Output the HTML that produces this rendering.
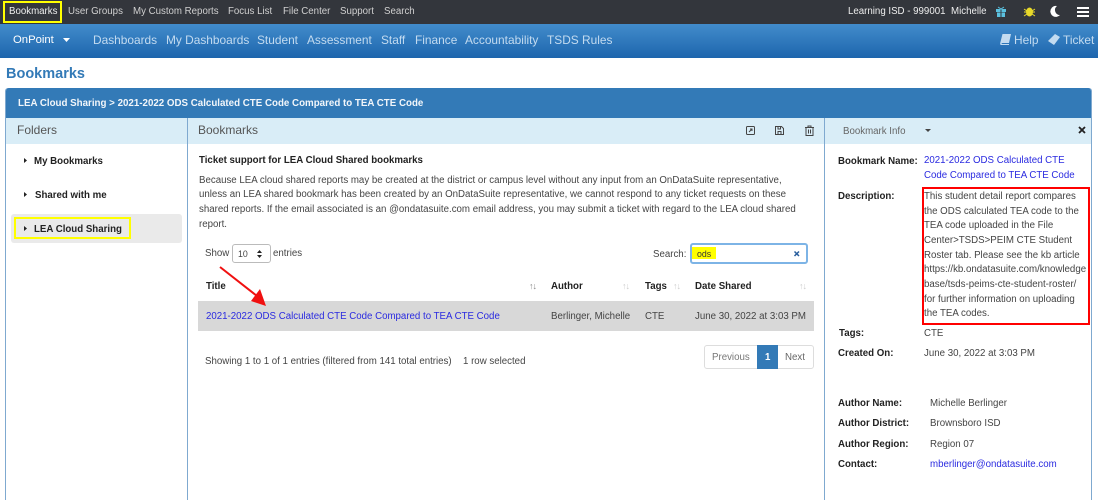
<!DOCTYPE html>
<html><head><meta charset="utf-8">
<style>
html,body{margin:0;padding:0;width:1098px;height:500px;overflow:hidden;background:#fff;font-family:"Liberation Sans",sans-serif;font-size:9.7px;color:#444}
.a{position:absolute;white-space:nowrap;line-height:16px}
.b{font-weight:bold;color:#222;}
.t{color:#d0d0d0;font-size:9.7px;line-height:14px}
.n{color:#c3dbf0;font-size:11.9px;line-height:16px}
a{color:#2a2ae0;text-decoration:none}
.a.d{line-height:14.67px}
svg{position:absolute;overflow:visible}
</style></head><body>
<div class="a" style="left:0;top:0;width:1098px;height:24px;background:#33363c"></div>
<div class="a" style="left:0;top:24px;width:1098px;height:34px;background:linear-gradient(#428ccb,#1d65ad)"></div>
<div class="a" style="left:3px;top:1px;width:55px;height:18px;border:2px solid #ff0"></div>
<div class="a t" style="left:9px;top:5px;color:#eee">Bookmarks</div>
<div class="a t" style="left:68px;top:5px">User Groups</div>
<div class="a t" style="left:133px;top:5px">My Custom Reports</div>
<div class="a t" style="left:228px;top:5px">Focus List</div>
<div class="a t" style="left:283px;top:5px">File Center</div>
<div class="a t" style="left:340px;top:5px">Support</div>
<div class="a t" style="left:384px;top:5px">Search</div>
<div class="a t" style="left:848px;top:5px;color:#eee">Learning ISD - 999001</div>
<div class="a t" style="left:951px;top:5px;color:#eee">Michelle</div>
<svg style="left:996px;top:7px" width="11" height="10"><path d="M0 2h10v3H0zM1 5.500h8V10H1z" fill="#5bc0de"/><path d="M5 2v8" stroke="#33363c"/><path d="M2 0l3 2 3-2" fill="none" stroke="#5bc0de"/></svg>
<svg style="left:1024px;top:6px" width="11" height="11"><ellipse cx="5.500" cy="6" rx="3.500" ry="4.500" fill="#e8d92a"/><path d="M0 3l3 2M11 3L8 5M0 6h3M11 6H8M0 10l3-2M11 10L8 8" stroke="#e8d92a"/></svg>
<svg style="left:1050px;top:6px" width="11" height="11"><path d="M7 0a5.500 5.500 0 1 0 3 9A5 5 0 0 1 7 0z" fill="#fff"/></svg>
<svg style="left:1077px;top:7px" width="12" height="10"><path d="M0 1h12M0 5h12M0 9h12" stroke="#fff" stroke-width="2"/></svg>
<div class="a" style="left:13px;top:32px;color:#fff;font-size:11.3px;line-height:16px">OnPoint</div>
<svg style="left:63px;top:38px" width="8" height="4"><path d="M0 0h7L3.500 4z" fill="#fff"/></svg>
<div class="a n" style="left:93px;top:32px">Dashboards</div>
<div class="a n" style="left:166px;top:32px">My Dashboards</div>
<div class="a n" style="left:257px;top:32px">Student</div>
<div class="a n" style="left:307px;top:32px">Assessment</div>
<div class="a n" style="left:381px;top:32px">Staff</div>
<div class="a n" style="left:415px;top:32px">Finance</div>
<div class="a n" style="left:465px;top:32px">Accountability</div>
<div class="a n" style="left:547px;top:32px">TSDS Rules</div>
<svg style="left:1000px;top:34px" width="11" height="11"><path d="M2.500 0H11L9 9H2.500q-1 0-1 1h7.500v1H1q-1 0-.8-2z" fill="#c3dbf0"/></svg>
<div class="a n" style="left:1014px;top:32px">Help</div>
<svg style="left:1048px;top:34px" width="12" height="11"><path d="M7 0l5 3-6 8-6-4z" fill="#c3dbf0"/></svg>
<div class="a n" style="left:1063px;top:32px">Ticket</div>

<div class="a" style="left:6px;top:65px;color:#337ab7;font-weight:bold;font-size:14.500px;line-height:18px">Bookmarks</div>

<div class="a" style="left:5px;top:88px;width:1087px;height:412px;border:1px solid #7fa9d0;border-bottom:0;border-radius:3px 3px 0 0;box-sizing:border-box"></div>
<div class="a" style="left:6px;top:88px;width:1085px;height:30px;background:#337ab7;border-radius:3px 3px 0 0"></div>
<div class="a" style="left:18px;top:96px;color:#f2f6fa;font-weight:bold;font-size:9.75px">LEA Cloud Sharing &gt; 2021-2022 ODS Calculated CTE Code Compared to TEA CTE Code</div>
<div class="a" style="left:6px;top:118px;width:1085px;height:26px;background:#d9edf7"></div>
<div class="a" style="left:187px;top:118px;width:1px;height:382px;background:#7fa9d0"></div>
<div class="a" style="left:824px;top:118px;width:1px;height:382px;background:#7fa9d0"></div>
<div class="a" style="left:17px;top:123px;font-size:12px;line-height:15px;color:#555">Folders</div>
<div class="a" style="left:198px;top:123px;font-size:12px;line-height:15px;color:#555">Bookmarks</div>
<div class="a" style="left:843px;top:124px;font-size:9.7px;color:#666">Bookmark Info</div>
<svg style="left:925px;top:129px" width="7" height="4"><path d="M0 0h6L3 3z" fill="#444"/></svg>
<svg style="left:1079px;top:127px" width="8" height="8"><path d="M0 0l6 6M6 0L0 6" stroke="#222" stroke-width="1.800"/></svg>
<svg style="left:746px;top:126px" width="10" height="10" fill="none" stroke="#444"><rect x=".5" y=".5" width="8" height="8" rx="1"/><path d="M3 6l3-3M4 3h2v2"/></svg>
<svg style="left:775px;top:126px" width="10" height="10" fill="none" stroke="#444"><path d="M.5.500h6l2 2v6h-8z"/><path d="M3 1v2h2.500V1M3 8V5.500h3V8"/></svg>
<svg style="left:805px;top:125px" width="10" height="11" fill="none" stroke="#444"><path d="M0 2.500h9M3 2.500V1h3v1.500M1 2.500v8h7v-8M3.500 4.500v4M5.500 4.500v4"/></svg>

<svg style="left:24px;top:158px" width="4" height="6"><path d="M0 0l3 2.500L0 5z" fill="#222"/></svg>
<div class="a b" style="left:34px;top:154px">My Bookmarks</div>
<svg style="left:24px;top:192px" width="4" height="6"><path d="M0 0l3 2.500L0 5z" fill="#222"/></svg>
<div class="a b" style="left:35px;top:188px">Shared with me</div>
<div class="a" style="left:11px;top:214px;width:171px;height:29px;background:#eaeaea;border-radius:3px"></div>
<div class="a" style="left:14px;top:217px;width:113px;height:18px;border:2px solid #ff0"></div>
<svg style="left:24px;top:226px" width="4" height="6"><path d="M0 0l3 2.500L0 5z" fill="#222"/></svg>
<div class="a b" style="left:34px;top:222px">LEA Cloud Sharing</div>

<div class="a b" style="left:199px;top:153px">Ticket support for LEA Cloud Shared bookmarks</div>
<div class="a d" style="left:199px;top:173.5px">Because LEA cloud shared reports may be created at the district or campus level without any input from an OnDataSuite representative,<br>unless an LEA shared bookmark has been created by an OnDataSuite representative, we cannot respond to any ticket requests on these<br>shared reports. If the email associated is an @ondatasuite.com email address, you may submit a ticket with regard to the LEA cloud shared<br>report.</div>

<div class="a" style="left:205px;top:246px">Show</div>
<div class="a" style="left:232px;top:244px;width:37px;height:17px;border:1px solid #bbb;border-radius:3px"></div>
<div class="a" style="left:238px;top:246px;font-size:8.8px">10</div>
<svg style="left:257px;top:250px" width="6" height="8"><path d="M0 3l2.500-3L5 3zM0 5l2.500 3L5 5z" fill="#222"/></svg>
<div class="a" style="left:273px;top:246px">entries</div>
<div class="a" style="left:653px;top:247px">Search:</div>
<div class="a" style="left:690px;top:243px;width:114px;height:17px;border:2px solid #7db4e6;border-radius:3px"></div>
<div class="a" style="left:692px;top:247px;width:24px;height:12px;background:#ff0"></div>
<div class="a" style="left:697px;top:246px;font-size:8.8px;color:#333">ods</div>
<svg style="left:794px;top:251px" width="6" height="6"><path d="M.5.500l4.500 4.500M5 .5L.5 5" stroke="#2a5f9e" stroke-width="1.500"/></svg>

<div class="a b" style="left:206px;top:279px">Title</div>
<div class="a b" style="left:551px;top:279px">Author</div>
<div class="a b" style="left:645px;top:279px">Tags</div>
<div class="a b" style="left:695px;top:279px">Date Shared</div>
<div class="a" style="left:529px;top:278px;color:#888;font-size:9px;letter-spacing:-1px">↑↓</div>
<div class="a" style="left:622px;top:278px;color:#ccc;font-size:9px;letter-spacing:-1px">↑↓</div>
<div class="a" style="left:673px;top:278px;color:#ccc;font-size:9px;letter-spacing:-1px">↑↓</div>
<div class="a" style="left:799px;top:278px;color:#ccc;font-size:9px;letter-spacing:-1px">↑↓</div>
<div class="a" style="left:198px;top:301px;width:616px;height:30px;background:#d8d8d8"></div>
<div class="a" style="left:206px;top:309px"><a>2021-2022 ODS Calculated CTE Code Compared to TEA CTE Code</a></div>
<div class="a" style="left:551px;top:309px">Berlinger, Michelle</div>
<div class="a" style="left:645px;top:309px">CTE</div>
<div class="a" style="left:695px;top:309px">June 30, 2022 at 3:03 PM</div>
<svg style="left:219px;top:266px" width="48" height="42"><path d="M1 1L38 30" stroke="#f01010" stroke-width="2"/><path d="M47 40L32 35 41 23z" fill="#f01010"/></svg>
<div class="a" style="left:205px;top:354px">Showing 1 to 1 of 1 entries (filtered from 141 total entries)</div>
<div class="a" style="left:463px;top:354px">1 row selected</div>
<div class="a" style="left:704px;top:345px;width:108px;height:22px;border:1px solid #ddd;border-radius:3px"></div>
<div class="a" style="left:757px;top:345px;width:21px;height:24px;background:#337ab7"></div>
<div class="a" style="left:712px;top:350px;color:#777">Previous</div>
<div class="a" style="left:765px;top:350px;color:#fff;font-weight:bold">1</div>
<div class="a" style="left:785px;top:350px;color:#666">Next</div>

<div class="a b" style="left:838px;top:154px">Bookmark Name:</div>
<div class="a d" style="left:924px;top:154px"><a>2021-2022 ODS Calculated CTE<br>Code Compared to TEA CTE Code</a></div>
<div class="a b" style="left:838px;top:189px">Description:</div>
<div class="a" style="left:922px;top:187px;width:164px;height:134px;border:2px solid #f00;box-sizing:content-box"></div>
<div class="a d" style="left:924px;top:190px">This student detail report compares<br>the ODS calculated TEA code to the<br>TEA code uploaded in the File<br>Center&gt;TSDS&gt;PEIM CTE Student<br>Roster tab. Please see the kb article<br>https://kb.ondatasuite.com/knowledge<br>base/tsds-peims-cte-student-roster/<br>for further information on uploading<br>the TEA codes.</div>
<div class="a b" style="left:839px;top:326px">Tags:</div>
<div class="a" style="left:924px;top:326px">CTE</div>
<div class="a b" style="left:838px;top:346px">Created On:</div>
<div class="a" style="left:924px;top:346px">June 30, 2022 at 3:03 PM</div>
<div class="a b" style="left:838px;top:396px">Author Name:</div>
<div class="a" style="left:930px;top:396px">Michelle Berlinger</div>
<div class="a b" style="left:838px;top:416px">Author District:</div>
<div class="a" style="left:930px;top:416px">Brownsboro ISD</div>
<div class="a b" style="left:838px;top:437px">Author Region:</div>
<div class="a" style="left:930px;top:437px">Region 07</div>
<div class="a b" style="left:838px;top:457px">Contact:</div>
<div class="a" style="left:930px;top:457px"><a>mberlinger@ondatasuite.com</a></div>
</body></html>
